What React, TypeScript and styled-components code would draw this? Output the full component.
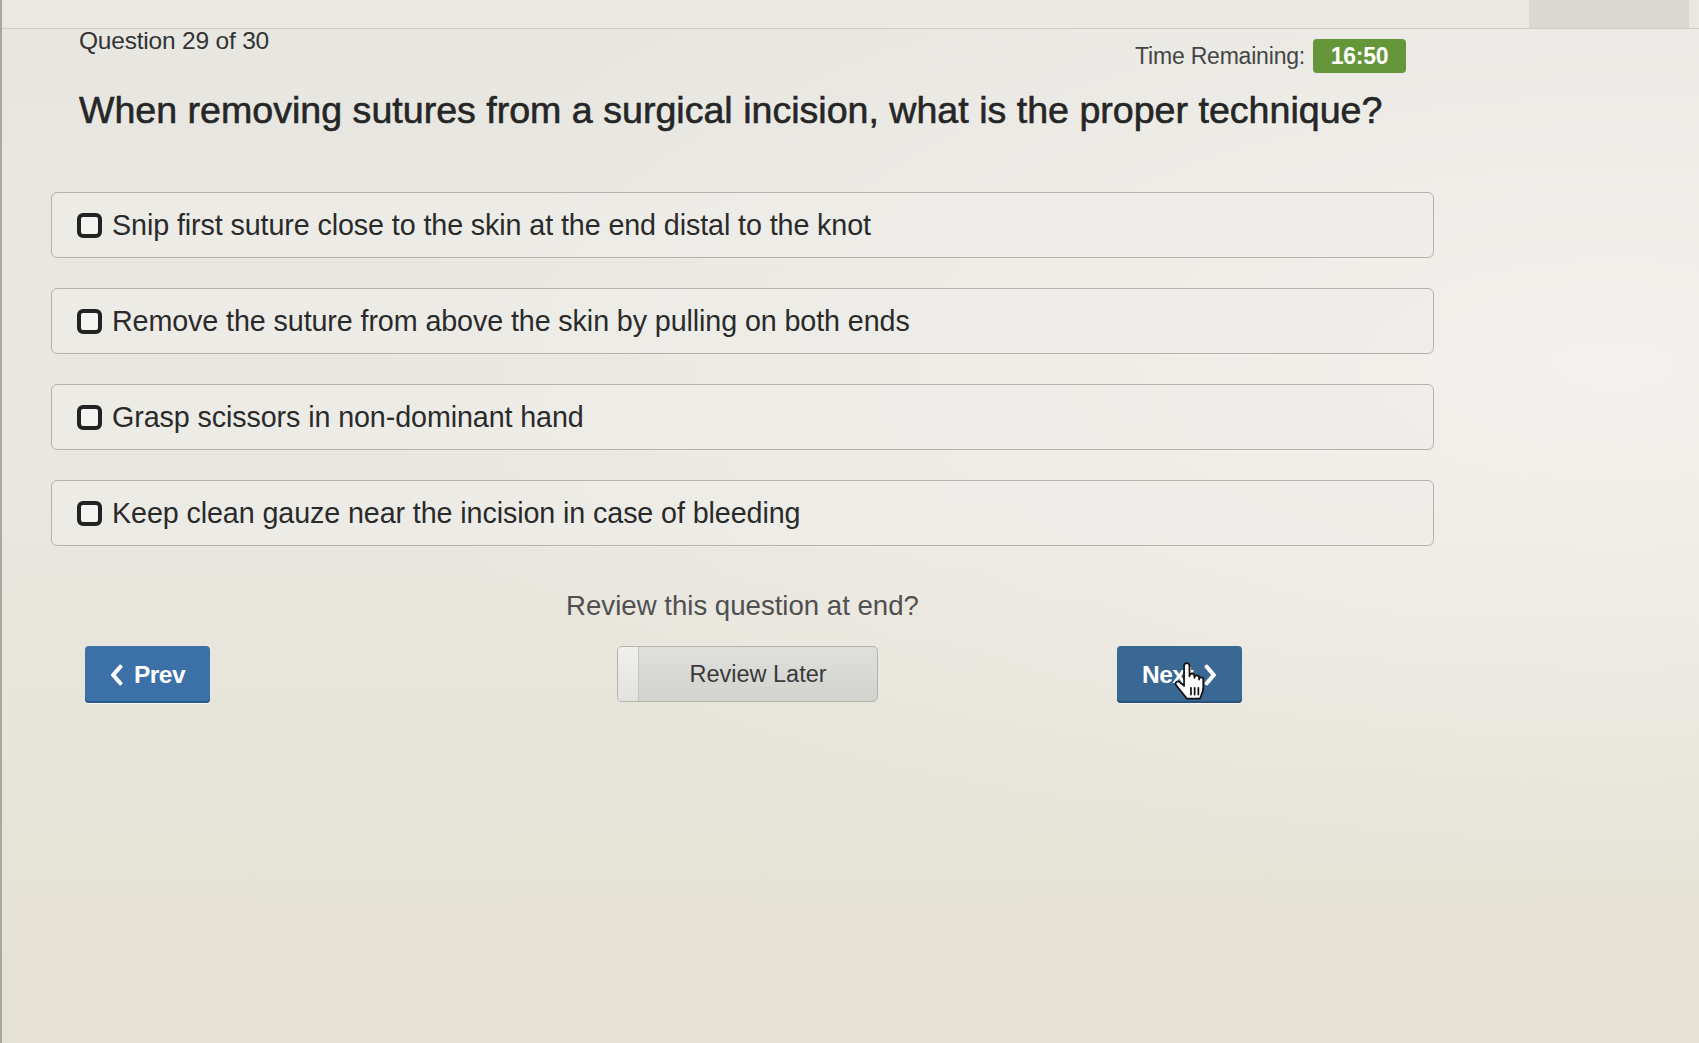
import styled, { createGlobalStyle } from "styled-components";

const GlobalStyle = createGlobalStyle`
  html, body {
    margin: 0;
    padding: 0;
  }
  body {
    font-family: "Liberation Sans", Arial, Helvetica, sans-serif;
    background: #e6e4dc;
  }
`;

const options = [
  "Snip first suture close to the skin at the end distal to the knot",
  "Remove the suture from above the skin by pulling on both ends",
  "Grasp scissors in non-dominant hand",
  "Keep clean gauze near the incision in case of bleeding",
];

const App = () => {
  return (
    <Page>
      <GlobalStyle />
      <TopStrip>
        <ChromeBlock />
      </TopStrip>
      <Content>
        <Header>
          <Counter>Question 29 of 30</Counter>
          <Timer>
            <TimerLabel>Time Remaining:</TimerLabel>
            <TimerBadge>16:50</TimerBadge>
          </Timer>
        </Header>
        <Question>
          When removing sutures from a surgical incision, what is the proper
          technique?
        </Question>
        <OptionList>
          {options.map((text) => (
            <Option key={text}>
              <Box />
              <OptionText>{text}</OptionText>
            </Option>
          ))}
        </OptionList>
        <ReviewPrompt>Review this question at end?</ReviewPrompt>
        <ButtonRow>
          <NavCell>
            <NavButton $tone="#3b71a6" $edge="#2c5a87" $gap={10}>
              <Chevron viewBox="0 0 12 20" $flip>
                <path d="M9 2.5 L2.5 10 L9 17.5" />
              </Chevron>
              Prev
            </NavButton>
          </NavCell>
          <NavCell $center>
            <ReviewButton>
              <ReviewStrip />
              <ReviewLabel>Review Later</ReviewLabel>
            </ReviewButton>
          </NavCell>
          <NavCell $offset={144}>
            <NavButton $tone="#3a6894" $edge="#2b5075" $gap={12}>
              Next
              <Chevron viewBox="0 0 12 20">
                <path d="M3 2.5 L9.5 10 L3 17.5" />
              </Chevron>
              <Pointer viewBox="0 0 26 32">
                <path d="M9 20 V4 C9 2.4 10 1.4 11.2 1.4 C12.4 1.4 13.4 2.4 13.4 4 V12.2 C13.4 10.9 14.3 10 15.4 10 C16.5 10 17.4 10.9 17.4 12.2 V13.4 C17.4 12.2 18.3 11.4 19.3 11.4 C20.3 11.4 21.2 12.2 21.2 13.4 V14.8 C21.2 13.8 22 13.1 22.9 13.1 C23.8 13.1 24.6 13.8 24.6 14.9 V21.5 C24.6 25.2 22.8 27.6 21.8 30.4 H11.2 C10.2 28.6 8.4 26.8 6.8 24.8 L2.6 19.4 C1.8 18.4 2 17.2 2.9 16.6 C3.8 16 4.9 16.3 5.6 17.1 Z" />
                <line x1="14.6" y1="21.5" x2="14.6" y2="27" />
                <line x1="17.6" y1="21.5" x2="17.6" y2="27" />
                <line x1="20.6" y1="21.5" x2="20.6" y2="27" />
              </Pointer>
            </NavButton>
          </NavCell>
        </ButtonRow>
      </Content>
    </Page>
  );
};

const Page = styled.div`
  min-height: 100vh;
  box-sizing: border-box;
  border-left: 2px solid #a8a7a1;
  background:
    radial-gradient(ellipse at 95% 35%, rgba(244, 243, 239, 0.85) 0%, rgba(244, 243, 239, 0) 55%),
    linear-gradient(180deg, #e7e6e1 0%, #e9e7e0 45%, #e5e1d3 100%);
  color: #2b2b2b;
`;

const TopStrip = styled.div`
  height: 28px;
  display: flex;
  justify-content: flex-end;
  border-bottom: 1px solid #cfcdc6;
  background: #e9e8e3;
`;

const ChromeBlock = styled.div`
  width: 160px;
  margin-right: 10px;
  background: #d9d8d3;
`;

const Content = styled.div`
  padding: 0 265px 0 49px;
`;

const Header = styled.div`
  display: flex;
  justify-content: space-between;
  align-items: flex-start;
  margin-top: -2px;
  padding: 0 28px 0 28px;
`;

const Counter = styled.div`
  font-size: 24.5px;
  color: #333;
  letter-spacing: -0.2px;
`;

const Timer = styled.div`
  display: flex;
  align-items: center;
  gap: 8px;
  margin-top: 12px;
`;

const TimerLabel = styled.span`
  font-size: 23px;
  color: #454545;
  letter-spacing: -0.2px;
`;

const TimerBadge = styled.span`
  display: inline-flex;
  align-items: center;
  justify-content: center;
  width: 93px;
  height: 34px;
  border-radius: 4px;
  background: #66963a;
  color: #fff;
  font-weight: 700;
  font-size: 23px;
  letter-spacing: -0.3px;
`;

const Question = styled.h1`
  margin: 16px 0 0 28px;
  font-size: 37.6px;
  font-weight: 400;
  line-height: 1.15;
  color: #262626;
  -webkit-text-stroke: 0.6px #262626;
  white-space: nowrap;
`;

const OptionList = styled.div`
  display: flex;
  flex-direction: column;
  gap: 30px;
  margin-top: 60px;
`;

const Option = styled.div`
  display: flex;
  align-items: center;
  gap: 10px;
  height: 66px;
  box-sizing: border-box;
  padding-left: 25px;
  border: 1.5px solid #b4b3ad;
  border-radius: 6px;
  background: rgba(238, 237, 232, 0.7);
`;

const Box = styled.span`
  width: 25px;
  height: 25px;
  box-sizing: border-box;
  border: 4px solid #222;
  border-radius: 6px;
  background: #f4f4f2;
  flex-shrink: 0;
`;

const OptionText = styled.span`
  font-size: 28.7px;
  color: #2a2a2a;
  letter-spacing: -0.1px;
`;

const ReviewPrompt = styled.div`
  margin-top: 44px;
  text-align: center;
  font-size: 27.6px;
  color: #505050;
`;

const ButtonRow = styled.div`
  display: grid;
  grid-template-columns: 1fr 1fr 1fr;
  margin-top: 24px;
`;

const NavCell = styled.div<{ $center?: boolean; $offset?: number }>`
  display: flex;
  justify-content: ${(p) => (p.$center ? "center" : "flex-start")};
  padding-left: ${(p) => (p.$center ? "10px" : `${p.$offset ?? 34}px`)};
`;

const NavButton = styled.button<{ $tone: string; $edge: string; $gap: number }>`
  position: relative;
  display: inline-flex;
  align-items: center;
  justify-content: center;
  gap: ${(p) => p.$gap}px;
  width: 125px;
  height: 57px;
  border: none;
  border-radius: 4px;
  background: ${(p) => p.$tone};
  box-shadow: inset 0 -2px 0 ${(p) => p.$edge}, 0 1px 0 rgba(255, 255, 255, 0.6);
  color: #fff;
  font-family: "Liberation Sans", Arial, sans-serif;
  font-weight: 700;
  font-size: 24.5px;
  letter-spacing: -0.5px;
  padding: 0;
`;

const Chevron = styled.svg<{ $flip?: boolean }>`
  width: 14px;
  height: 22px;
  fill: none;
  stroke: #fff;
  stroke-width: 3.8;
  stroke-linecap: round;
  stroke-linejoin: round;
  margin-left: ${(p) => (p.$flip ? "0" : "-2px")};
`;

const Pointer = styled.svg`
  position: absolute;
  left: 56px;
  top: 15px;
  width: 32px;
  height: 40px;
  fill: #fff;
  stroke: #111;
  stroke-width: 1.4;
  stroke-linejoin: round;
  stroke-linecap: round;
`;

const ReviewButton = styled.div`
  display: flex;
  width: 261px;
  height: 56px;
  box-sizing: border-box;
  border: 1.5px solid #b4b3ae;
  border-radius: 5px;
  overflow: hidden;
  background: linear-gradient(180deg, #dfdfdc 0%, #d2d2ce 100%);
`;

const ReviewStrip = styled.div`
  width: 20px;
  background: linear-gradient(180deg, #efefec 0%, #e2e2de 100%);
  border-right: 1px solid #c4c3be;
`;

const ReviewLabel = styled.div`
  flex: 1;
  display: flex;
  align-items: center;
  justify-content: center;
  font-size: 23.5px;
  color: #3a3a3a;
`;

export default App;
